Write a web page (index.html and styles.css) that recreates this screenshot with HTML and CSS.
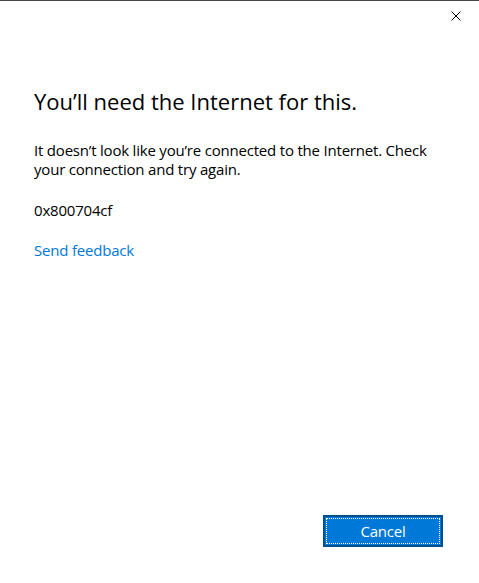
FILE: index.html
```html
<!DOCTYPE html>
<html lang="en">
<head>
    <meta charset="UTF-8">
    <title>You'll need the Internet for this.</title>
    <link rel="stylesheet" href="styles.css">
</head>
<body>
<div class="dialog">
    <div class="titlebar">
        <span class="close" title="Close">
            <svg width="10" height="10" viewBox="0 0 10 10">
                <path d="M0.5 0.5L9.5 9.5M9.5 0.5L0.5 9.5" stroke="#000" stroke-width="1" fill="none"/>
            </svg>
        </span>
    </div>
    <div class="content">
        <h1 class="title">You&#8217;ll need the Internet for this.</h1>
        <p class="text">It doesn&#8217;t look like you&#8217;re connected to the Internet. Check your connection and try again.</p>
        <p class="text code">0x800704cf</p>
        <a class="text link" href="#">Send feedback</a>
    </div>
    <div class="footer">
        <button class="btn">Cancel</button>
    </div>
</div>
</body>
</html>
```
FILE: styles.css
```css
* {
    padding: 0;
    margin: 0;
    box-sizing: border-box;
}

body {
    background: #fff;
    font-family: "Open Sans", "Noto Sans", sans-serif;
    color: #000;
}

.dialog {
    height: 100vh;
    border-top: 1px solid #444;
    display: flex;
    flex-direction: column;
}

.titlebar {
    display: flex;
    justify-content: flex-end;
    padding: 10px 18px 0 0;
}

.close {
    display: block;
    width: 10px;
    height: 10px;
    cursor: pointer;
}

.close svg {
    display: block;
}

.content {
    flex: 1;
    padding: 65px 36px 0 34px;
    display: flex;
    flex-direction: column;
    align-items: flex-start;
}

.title {
    font-size: 22px;
    font-weight: normal;
    line-height: 30px;
}

.text {
    font-size: 15px;
    line-height: 19px;
    margin-top: 25px;
    letter-spacing: -0.2px;
}

.code {
    margin-top: 22px;
}

.link {
    margin-top: 21px;
    color: #0078d7;
    text-decoration: none;
}

.footer {
    display: flex;
    justify-content: flex-end;
    padding: 0 36px 36px 0;
}

.btn {
    width: 120px;
    height: 32px;
    background: #0078d7;
    border: 2px solid #00508f;
    outline: 1px dotted #fff;
    outline-offset: -4px;
    color: #fff;
    font-family: "Open Sans", "Noto Sans", sans-serif;
    font-size: 15px;
    letter-spacing: -0.2px;
    cursor: pointer;
}
```
